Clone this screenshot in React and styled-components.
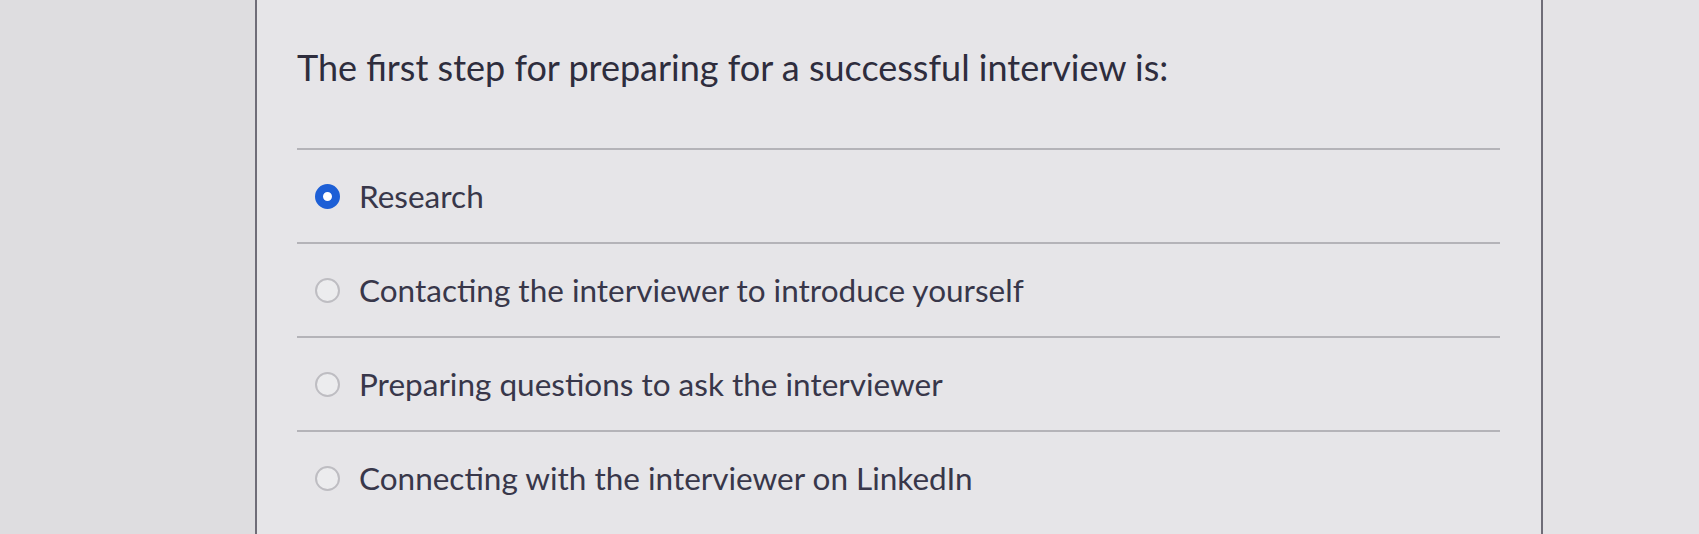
import React from 'react';
import styled, { createGlobalStyle } from 'styled-components';

const GlobalStyle = createGlobalStyle`
    html, body {
        margin: 0;
        padding: 0;
        background: #e3e2e5;
    }
    body {
        font-family: Lato, "Open Sans", sans-serif;
    }
`;

const Page = styled.div`
    display: flex;
    width: 1699px;
    height: 534px;
    overflow: hidden;
    background: #e4e3e6;
`;

const SidePanel = styled.div`
    width: 255px;
    flex-shrink: 0;
    background: #dedde0;
    border-right: 2px solid #6f6d78;
`;

const QuestionPanel = styled.div`
    box-sizing: border-box;
    width: 1286px;
    flex-shrink: 0;
    padding: 46px 41px 0 40px;
    background: #e6e5e8;
    border-right: 2px solid #6f6d78;
`;

const Question = styled.h2`
    margin: 0 0 59px;
    font-size: 36px;
    font-weight: 400;
    line-height: 43px;
    color: #2e2d3d;
`;

const Options = styled.div`
    border-top: 2px solid #b4b3b8;
`;

const OptionRow = styled.label`
    display: flex;
    align-items: center;
    gap: 19px;
    height: 92px;
    padding-left: 18px;
    border-bottom: ${p => (p.last ? 'none' : '2px solid #b4b3b8')};
    cursor: pointer;
`;

const Radio = styled.span`
    box-sizing: border-box;
    width: 25px;
    height: 25px;
    border-radius: 50%;
    flex-shrink: 0;
    background: ${p => (p.checked ? '#ffffff' : '#ececee')};
    border: ${p => (p.checked ? '8px solid #1d5fd6' : '2px solid #bebdc2')};
`;

const OptionText = styled.span`
    font-size: 31.5px;
    color: #38374a;
`;

const options = [
    'Research',
    'Contacting the interviewer to introduce yourself',
    'Preparing questions to ask the interviewer',
    'Connecting with the interviewer on LinkedIn',
];

export default function App() {
    const [selected, setSelected] = React.useState(0);
    return (
        <>
            <GlobalStyle />
            <Page>
                <SidePanel />
                <QuestionPanel>
                    <Question>The first step for preparing for a successful interview is:</Question>
                    <Options>
                        {options.map((text, i) => (
                            <OptionRow
                                key={text}
                                last={i === options.length - 1}
                                onClick={() => setSelected(i)}
                            >
                                <Radio checked={selected === i} />
                                <OptionText>{text}</OptionText>
                            </OptionRow>
                        ))}
                    </Options>
                </QuestionPanel>
            </Page>
        </>
    );
}
